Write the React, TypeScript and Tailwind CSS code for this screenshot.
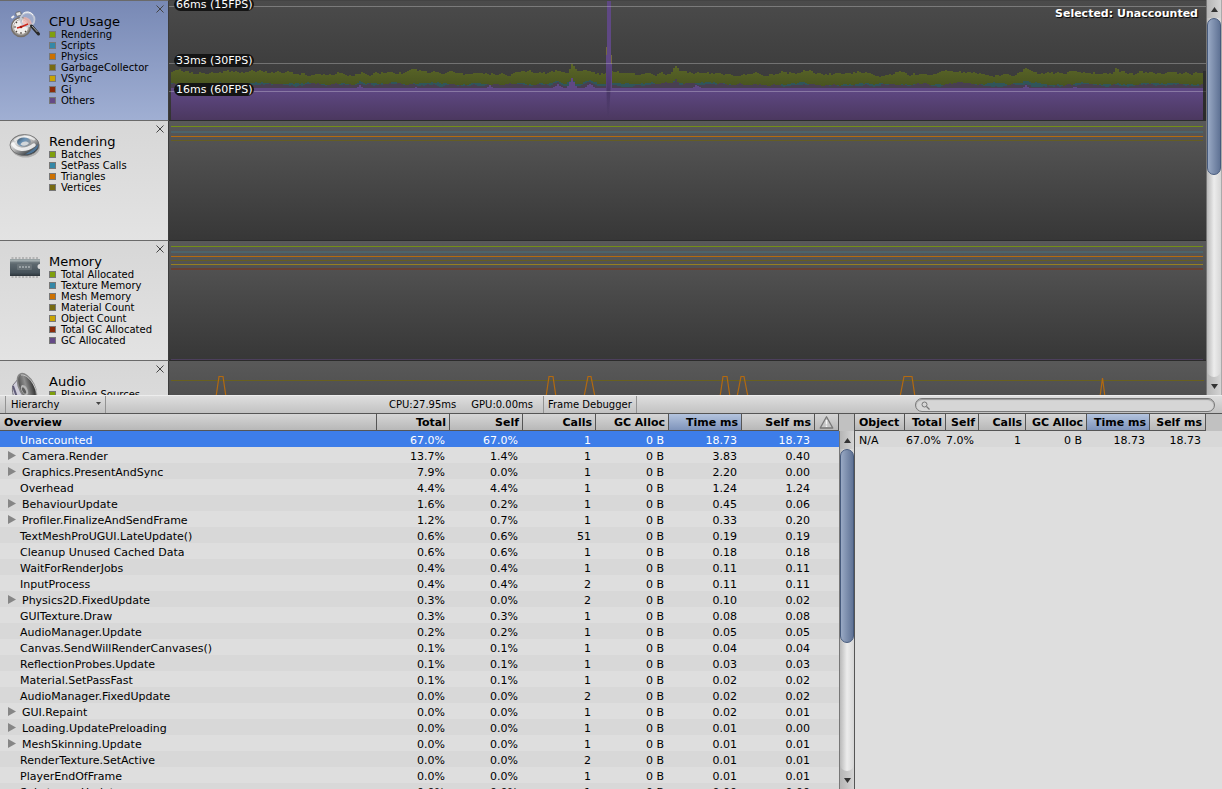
import { useState } from 'react';
import type { ReactNode } from 'react';

type Swatch = { label: string; color: string };

type ProfilerModule = {
  name: string;
  icon: ReactNode;
  chart: ReactNode;
  items: Swatch[];
  selected?: boolean;
};

type Sample = {
  name: string;
  parent?: boolean;
  total: string;
  self: string;
  calls: number;
  time: string;
  selfTime: string;
};

const GREEN = 'bg-[#7f9f0d]';
const BLUE = 'bg-[#3488a8]';
const ORANGE = 'bg-[#cc7000]';
const OLIVE = 'bg-[#776b13]';
const YELLOW = 'bg-[#c9a402]';
const RED = 'bg-[#8c2b0a]';
const PURPLE = 'bg-[#654a87]';

const CHART_WIDTH = 1037;
const CHART_HEIGHT = 119;

// Steps of two units, with a fixed pseudo random wobble
function wobble(seed: number, base: number, amount: number, peaks: number[][]) {
  let value = seed;
  let drift = 0;
  const points: number[][] = [];
  for (let x = 2; x <= 1033; x += 2) {
    value = (value * 16807) % 2147483647;
    drift = drift * 0.8 + (value / 2147483647 - 0.5) * amount;
    let y = base + drift;
    for (const [px, height, spread] of peaks) {
      const distance = Math.abs(x - px);
      if (distance < spread) y -= height * (1 - distance / spread);
    }
    points.push([x, Math.round(y)]);
  }
  return points;
}

function toArea(points: number[][]) {
  const steps = points.map(([x, y]) => `L${x} ${y}H${x + 2}`).join('');
  return `M2 119${steps}V119Z`;
}

const renderingArea = toArea(
  wobble(77, 72, 3, [[402, 8, 5], [506, 6, 4], [947, 6, 3], [388, 3, 8], [420, 3, 8], [856, 3, 7], [30, 2, 12], [610, 2, 12], [905, 3, 8]]),
);
const scriptsArea = toArea(
  wobble(4211, 83, 1.8, [[402, 5, 5], [506, 6, 5], [420, 3, 8], [388, 3, 6], [856, 3, 6], [190, 3, 5]]),
);
const physicsArea = toArea(
  wobble(951, 84, 2, [[402, 5, 4], [506, 5, 4], [420, 3, 6], [388, 3, 6], [856, 3, 6]]),
);
const othersArea = toArea(
  wobble(33, 87, 0.4, [[402, 10, 5], [388, 4, 6], [420, 4, 6], [527, 3, 5], [856, 3, 4], [190, 3, 4], [320, 3, 3]]),
);

function ChartFrame({ children }: { children: ReactNode }) {
  return (
    <svg
      className="block h-full w-full"
      viewBox={`0 0 ${CHART_WIDTH} ${CHART_HEIGHT}`}
      preserveAspectRatio="none"
      aria-hidden="true"
    >
      {children}
    </svg>
  );
}

function CpuChart() {
  return (
    <ChartFrame>
      <defs>
        <linearGradient id="othersFill" x1="0" y1="88" x2="0" y2="119" gradientUnits="userSpaceOnUse">
          <stop offset="0" stopColor="#5f4884" />
          <stop offset="1" stopColor="#4b385f" />
        </linearGradient>
        <linearGradient id="renderingFill" x1="0" y1="63" x2="0" y2="88" gradientUnits="userSpaceOnUse">
          <stop offset="0" stopColor="#5b6628" />
          <stop offset="1" stopColor="#46511f" />
        </linearGradient>
        <linearGradient id="spikeFade" x1="0" y1="0" x2="0" y2="1">
          <stop offset="0" stopColor="#33264c" stopOpacity="0.1" />
          <stop offset="0.5" stopColor="#33264c" stopOpacity="0.5" />
          <stop offset="1" stopColor="#33264c" stopOpacity="0" />
        </linearGradient>
      </defs>
      <g shapeRendering="crispEdges">
        <path d={renderingArea} fill="url(#renderingFill)" />
        <path d={scriptsArea} fill="#30555a" />
        <path d={physicsArea} fill="#483f50" />
        <path d={othersArea} fill="url(#othersFill)" />
        <path d="M437 88V54H438V0H442V63H443V88Z" fill="#5f4884" />
        <rect x="437" y="46" width="1" height="8" fill="#746a3f" />
        <rect x="442" y="54" width="1" height="9" fill="#746a3f" />
      </g>
      <path d="M437 62H443L440 116H438Z" fill="url(#spikeFade)" />
      <g shapeRendering="crispEdges" fill="#ffffff" fillOpacity="0.27">
        <rect x="0" y="5" width="1037" height="1" />
        <rect x="0" y="62" width="1037" height="1" />
        <rect x="0" y="90" width="1037" height="1" />
      </g>
      <rect x="1034" y="70" width="3" height="49" fill="#262626" fillOpacity="0.6" />
    </ChartFrame>
  );
}

function LinesChart({ lines }: { lines: [number, number, string][] }) {
  return (
    <ChartFrame>
      <g shapeRendering="crispEdges">
        {lines.map(([y, height, color]) => (
          <rect key={y} x="2" y={y} width="1032" height={height} fill={color} />
        ))}
      </g>
    </ChartFrame>
  );
}

function AudioChart() {
  return (
    <ChartFrame>
      <rect x="2" y="19" width="1033" height="1" fill="#69601e" />
      <path
        d="M47 36L50 15.500H54L57 36M377 36L380 15.500H384L387 36M415 36L419 15.500H422L426 36M551 36L554 15.500H558L561 36M568 36L572 15.500H575L579 36M731 36L735 15.500H743L746 36M931 36L933.500 17L936 36"
        fill="none"
        stroke="#b36a10"
        strokeWidth="1.200"
      />
    </ChartFrame>
  );
}

function StopwatchIcon() {
  return (
    <svg className="size-8" viewBox="0 0 32 32" aria-hidden="true">
      <defs>
        <radialGradient id="watchRim" cx="0.4" cy="0.35">
          <stop offset="0.6" stopColor="#ffffff" />
          <stop offset="1" stopColor="#8f8f8f" />
        </radialGradient>
      </defs>
      <rect x="7" y="3" width="5" height="4" rx="1" fill="#e4e4e4" stroke="#606060" strokeWidth="0.8" transform="rotate(-12 9 5)" />
      <path d="M2.500 9L5 7" stroke="#efefef" strokeWidth="2" />
      <circle cx="12" cy="18" r="9.500" fill="url(#watchRim)" stroke="#77706a" strokeWidth="1.500" />
      <circle cx="12" cy="18" r="7.500" fill="#f1eeec" stroke="#aaa39c" />
      <path d="M12 11V13M12 23V25M5 18H7M7 13L8 14M7 23L8 22M17 23L16 22" stroke="#4e4640" strokeWidth="1.200" />
      <path d="M15 8A8 8 0 0 1 23 15L12 18Z" fill="#ee9a92" fillOpacity="0.75" />
      <circle cx="18.500" cy="10.500" r="7" fill="#ffffff" fillOpacity="0.25" stroke="#c3c9d6" strokeWidth="1.800" />
      <path d="M14 4.500A7 7 0 0 1 24 6" fill="none" stroke="#f3f5f8" strokeWidth="1" />
      <path d="M12 18L19 15M8 19L12 18" stroke="#c9271d" strokeWidth="1.400" />
      <circle cx="12" cy="18" r="1.300" fill="#a51710" />
      <path d="M22.500 17L29.500 25" stroke="#282828" strokeWidth="3" strokeLinecap="round" />
      <path d="M23 17L28.500 23" stroke="#c8c8c8" strokeWidth="0.800" />
    </svg>
  );
}

function TorusIcon() {
  return (
    <svg className="size-8" viewBox="0 0 32 32" aria-hidden="true">
      <defs>
        <linearGradient id="torusBody" x1="0" y1="0.200" x2="0.600" y2="1">
          <stop offset="0" stopColor="#8a8a8a" />
          <stop offset="0.25" stopColor="#e2e2e2" />
          <stop offset="0.55" stopColor="#b0b0b0" />
          <stop offset="1" stopColor="#30363b" />
        </linearGradient>
        <linearGradient id="torusHole" x1="0" y1="0" x2="1" y2="0.600">
          <stop offset="0" stopColor="#3c5265" />
          <stop offset="0.5" stopColor="#6a92b5" />
          <stop offset="1" stopColor="#8f9499" />
        </linearGradient>
      </defs>
      <ellipse cx="16.500" cy="18" rx="14.500" ry="10.500" fill="#000000" fillOpacity="0.2" />
      <ellipse cx="15.500" cy="16" rx="14.500" ry="10.500" fill="url(#torusBody)" stroke="#6b6b6b" strokeWidth="0.800" />
      <path d="M16 25.500C23 25.500 29 21 29.500 15C25 20 21 22.500 16 25.500Z" fill="#4f7596" />
      <path d="M4 15C7 21 16 22.500 25 16" stroke="#fafafa" strokeOpacity="0.85" strokeWidth="3.500" fill="none" strokeLinecap="round" />
      <path d="M6 11C9 7.500 19 6 25 10.500" stroke="#ffffff" strokeOpacity="0.6" strokeWidth="2" fill="none" strokeLinecap="round" />
      <ellipse cx="15" cy="13" rx="7" ry="4.500" fill="url(#torusHole)" />
      <path d="M11.500 15.500C12.500 12 18 11.500 20 14C18 17 14 17.500 11.500 15.500Z" fill="#d3d7da" />
    </svg>
  );
}

function ChipIcon() {
  return (
    <svg className="size-8" viewBox="0 -2 32 32" aria-hidden="true">
      <defs>
        <linearGradient id="chipBody" x1="0" y1="0" x2="0" y2="1">
          <stop offset="0" stopColor="#929c9f" />
          <stop offset="0.3" stopColor="#5d686e" />
          <stop offset="0.8" stopColor="#46525a" />
          <stop offset="1" stopColor="#2c343a" />
        </linearGradient>
      </defs>
      <path d="M2.500 7.500H30M2.500 25.500H30" stroke="#b4b4b4" strokeWidth="3" strokeDasharray="2 1.500" />
      <path d="M1 8H31V13A2.500 2.500 0 0 0 31 18V25H1Z" fill="url(#chipBody)" />
      <path d="M1 9.500H31" stroke="#a3adaf" strokeWidth="2" />
      <rect x="8" y="13" width="15" height="6" rx="1" fill="#7b8488" fillOpacity="0.5" />
      <path d="M10 16H21" stroke="#a9b1b4" strokeWidth="1.500" strokeDasharray="2 1" />
    </svg>
  );
}

function SpeakerIcon() {
  return (
    <svg className="size-8" viewBox="0 -3 32 32" aria-hidden="true">
      <defs>
        <linearGradient id="coneFill" x1="0" y1="0" x2="1" y2="0.5">
          <stop offset="0" stopColor="#333333" />
          <stop offset="0.55" stopColor="#8e8e8e" />
          <stop offset="1" stopColor="#333333" />
        </linearGradient>
      </defs>
      <path d="M10 6L4 13C2 19 5 28 9 31L20 30Z" fill="#cfcdd9" stroke="#77757f" />
      <path d="M4 14L10 31" stroke="#605c78" strokeWidth="2" />
      <ellipse cx="18" cy="15.500" rx="7.500" ry="15" fill="url(#coneFill)" stroke="#858585" strokeWidth="1.600" transform="rotate(-27 18 15.500)" />
      <path d="M12 3C19 2 28 14 29 27" stroke="#d5d5d5" strokeWidth="0.800" fill="none" />
      <ellipse cx="15.500" cy="18" rx="3" ry="5.500" fill="#b5b5b5" transform="rotate(-27 15.500 18)" />
      <ellipse cx="15" cy="18.500" rx="1.500" ry="3.500" fill="#5c5c5c" transform="rotate(-27 15 18.500)" />
    </svg>
  );
}

const modules: ProfilerModule[] = [
  {
    name: 'CPU Usage',
    icon: <StopwatchIcon />,
    chart: <CpuChart />,
    selected: true,
    items: [
      { label: 'Rendering', color: GREEN },
      { label: 'Scripts', color: BLUE },
      { label: 'Physics', color: ORANGE },
      { label: 'GarbageCollector', color: OLIVE },
      { label: 'VSync', color: YELLOW },
      { label: 'Gi', color: RED },
      { label: 'Others', color: PURPLE },
    ],
  },
  {
    name: 'Rendering',
    icon: <TorusIcon />,
    chart: <LinesChart lines={[[5, 1, '#748d17'], [10, 2, '#4c636b'], [15, 1, '#b36a10'], [19, 1, '#655d22']]} />,
    items: [
      { label: 'Batches', color: GREEN },
      { label: 'SetPass Calls', color: BLUE },
      { label: 'Triangles', color: ORANGE },
      { label: 'Vertices', color: OLIVE },
    ],
  },
  {
    name: 'Memory',
    icon: <ChipIcon />,
    chart: (
      <LinesChart
        lines={[
          [5, 1, '#748d17'],
          [10, 2, '#4c636b'],
          [15, 1, '#b36a10'],
          [19, 1, '#655d22'],
          [23, 1, '#967f20'],
          [27, 2, '#683f32'],
          [118, 1, '#4c3f5c'],
        ]}
      />
    ),
    items: [
      { label: 'Total Allocated', color: GREEN },
      { label: 'Texture Memory', color: BLUE },
      { label: 'Mesh Memory', color: ORANGE },
      { label: 'Material Count', color: OLIVE },
      { label: 'Object Count', color: YELLOW },
      { label: 'Total GC Allocated', color: RED },
      { label: 'GC Allocated', color: PURPLE },
    ],
  },
  {
    name: 'Audio',
    icon: <SpeakerIcon />,
    chart: <AudioChart />,
    items: [{ label: 'Playing Sources', color: GREEN }],
  },
];

const samples: Sample[] = [
  { name: 'Unaccounted', total: '67.0%', self: '67.0%', calls: 1, time: '18.73', selfTime: '18.73' },
  { name: 'Camera.Render', parent: true, total: '13.7%', self: '1.4%', calls: 1, time: '3.83', selfTime: '0.40' },
  { name: 'Graphics.PresentAndSync', parent: true, total: '7.9%', self: '0.0%', calls: 1, time: '2.20', selfTime: '0.00' },
  { name: 'Overhead', total: '4.4%', self: '4.4%', calls: 1, time: '1.24', selfTime: '1.24' },
  { name: 'BehaviourUpdate', parent: true, total: '1.6%', self: '0.2%', calls: 1, time: '0.45', selfTime: '0.06' },
  { name: 'Profiler.FinalizeAndSendFrame', parent: true, total: '1.2%', self: '0.7%', calls: 1, time: '0.33', selfTime: '0.20' },
  { name: 'TextMeshProUGUI.LateUpdate()', total: '0.6%', self: '0.6%', calls: 51, time: '0.19', selfTime: '0.19' },
  { name: 'Cleanup Unused Cached Data', total: '0.6%', self: '0.6%', calls: 1, time: '0.18', selfTime: '0.18' },
  { name: 'WaitForRenderJobs', total: '0.4%', self: '0.4%', calls: 1, time: '0.11', selfTime: '0.11' },
  { name: 'InputProcess', total: '0.4%', self: '0.4%', calls: 2, time: '0.11', selfTime: '0.11' },
  { name: 'Physics2D.FixedUpdate', parent: true, total: '0.3%', self: '0.0%', calls: 2, time: '0.10', selfTime: '0.02' },
  { name: 'GUITexture.Draw', total: '0.3%', self: '0.3%', calls: 1, time: '0.08', selfTime: '0.08' },
  { name: 'AudioManager.Update', total: '0.2%', self: '0.2%', calls: 1, time: '0.05', selfTime: '0.05' },
  { name: 'Canvas.SendWillRenderCanvases()', total: '0.1%', self: '0.1%', calls: 1, time: '0.04', selfTime: '0.04' },
  { name: 'ReflectionProbes.Update', total: '0.1%', self: '0.1%', calls: 1, time: '0.03', selfTime: '0.03' },
  { name: 'Material.SetPassFast', total: '0.1%', self: '0.1%', calls: 1, time: '0.02', selfTime: '0.02' },
  { name: 'AudioManager.FixedUpdate', total: '0.0%', self: '0.0%', calls: 2, time: '0.02', selfTime: '0.02' },
  { name: 'GUI.Repaint', parent: true, total: '0.0%', self: '0.0%', calls: 1, time: '0.02', selfTime: '0.01' },
  { name: 'Loading.UpdatePreloading', parent: true, total: '0.0%', self: '0.0%', calls: 1, time: '0.01', selfTime: '0.00' },
  { name: 'MeshSkinning.Update', parent: true, total: '0.0%', self: '0.0%', calls: 1, time: '0.01', selfTime: '0.01' },
  { name: 'RenderTexture.SetActive', total: '0.0%', self: '0.0%', calls: 2, time: '0.01', selfTime: '0.01' },
  { name: 'PlayerEndOfFrame', total: '0.0%', self: '0.0%', calls: 1, time: '0.01', selfTime: '0.01' },
  { name: 'Substance.Update', total: '0.0%', self: '0.0%', calls: 1, time: '0.00', selfTime: '0.00' },
];

const HEAD = 'h-[17px] overflow-hidden border-r border-b border-[#555] bg-linear-to-b from-[#d6d6d6] to-[#b8b8b8] p-0 pt-[2px] pr-[3px] leading-[14px] font-bold whitespace-nowrap';
const HEAD_ACTIVE = 'h-[17px] overflow-hidden border-r border-b border-[#555] bg-linear-to-b from-[#b4c4de] to-[#7f94bb] p-0 pt-[2px] pr-[3px] leading-[14px] font-bold whitespace-nowrap';
const CELL = 'h-4 overflow-hidden p-0 pt-[3px] pr-[5px] text-right leading-[13px] whitespace-nowrap';

function ModulePanel({ module, onClose }: { module: ProfilerModule; onClose: () => void }) {
  return (
    <div className="flex h-[120px] shrink-0">
      <div
        className={`flex w-[169px] shrink-0 border-t border-r border-t-[#6a6a6a] border-r-[#3c3c3c] bg-linear-to-b pr-1 pl-[9px] ${
          module.selected ? 'from-[#7889b5] to-[#a0afd3]' : 'from-[#d7d7d7] to-[#e3e3e3]'
        }`}
      >
        <div className="w-10 shrink-0 pt-2">{module.icon}</div>
        <div className="min-w-0 flex-1 pt-3">
          <h2 className="h-4 text-[13px] leading-[18px] whitespace-nowrap">{module.name}</h2>
          <ul>
            {module.items.map((item) => (
              <li key={item.label} className="flex h-[11px] items-center gap-[5px] text-[10px] leading-[11px] whitespace-nowrap">
                <span className={`size-[7px] shrink-0 border border-[#777] ${item.color}`} />
                {item.label}
              </li>
            ))}
          </ul>
        </div>
        <div className="pt-1">
          <button type="button" aria-label={`Close ${module.name}`} onClick={onClose} className="block">
            <svg className="size-2" viewBox="0 0 8 8" aria-hidden="true">
              <path d="M0.500 0.500L7.500 7.500M7.500 0.500L0.500 7.500" stroke="#444" strokeWidth="1" />
            </svg>
          </button>
        </div>
      </div>
      <div
        className={`relative min-w-0 flex-1 border-t bg-linear-to-b ${
          module.selected ? 'border-[#444] from-[#4b4b4b] to-[#333]' : 'border-[#2b2b2b] from-[#595959] to-[#373737]'
        }`}
      >
        {module.chart}
        {module.selected && (
          <>
            <ChartLabel className="-top-[3px]">66ms (15FPS)</ChartLabel>
            <ChartLabel className="top-[53px]">33ms (30FPS)</ChartLabel>
            <ChartLabel className="top-[82px]">16ms (60FPS)</ChartLabel>
            <p className="absolute top-1 right-2 text-[11px] leading-[18px] font-bold text-white [text-shadow:1px_1px_1px_#000]">
              Selected: Unaccounted
            </p>
          </>
        )}
      </div>
    </div>
  );
}

function ChartLabel({ className, children }: { className: string; children: ReactNode }) {
  return (
    <span className={`absolute left-[5px] rounded-full bg-[#141414] px-[2px] text-[11px] leading-[13px] whitespace-nowrap text-white ${className}`}>
      {children}
    </span>
  );
}

// Share of the track that the thumb takes is given by the two flex weights
function ScrollBar({ thumb, rest }: { thumb: number; rest: number }) {
  return (
    <div className="flex min-w-0 flex-1 flex-col border-l border-[#777] bg-linear-to-r from-[#b5b5b5] to-[#d5d5d5]">
      <ArrowButton direction="up" />
      <div className="flex min-h-0 flex-1 flex-col rounded-b-full bg-linear-to-r from-[#b9b9b9] via-[#ececec] to-[#d6d6d6]">
        <div
          className="rounded-full border border-[#465a7c] bg-linear-to-r from-[#99a9c4] to-[#607395]"
          style={{ flexGrow: thumb, flexBasis: 0 }}
        />
        <div style={{ flexGrow: rest, flexBasis: 0 }} />
      </div>
      <ArrowButton direction="down" />
    </div>
  );
}

function ArrowButton({ direction }: { direction: 'up' | 'down' }) {
  return (
    <button type="button" aria-label={`Scroll ${direction}`} className="flex h-[18px] shrink-0 items-center justify-center">
      <svg className="h-[5px] w-[7px]" viewBox="0 0 7 5" aria-hidden="true">
        <path d={direction === 'up' ? 'M3.500 0L7 5H0Z' : 'M0 0H7L3.500 5Z'} fill="#333" />
      </svg>
    </button>
  );
}

function Toolbar({ query, onQuery }: { query: string; onQuery: (value: string) => void }) {
  return (
    <div className="flex h-[18px] shrink-0 items-stretch border-t border-[#ededed] bg-linear-to-b from-[#dedede] to-[#c2c2c2] pl-[5px] text-[10px] leading-4">
      <label className="relative flex border-x border-[#939393]">
        <span className="sr-only">View</span>
        <select className="w-[99px] appearance-none bg-transparent pl-[5px] outline-none">
          <option>Hierarchy</option>
          <option>Timeline</option>
        </select>
        <svg className="pointer-events-none absolute top-[6px] right-1 h-[3px] w-[5px]" viewBox="0 0 5 3" aria-hidden="true">
          <path d="M0 0H5L2.500 3Z" fill="#444" />
        </svg>
      </label>
      <p className="ml-[283px] flex gap-[15px] pt-px whitespace-nowrap">
        <span>CPU:27.95ms</span>
        <span>GPU:0.00ms</span>
      </p>
      <button type="button" className="ml-[10px] border-x border-[#939393] px-1 whitespace-nowrap">
        Frame Debugger
      </button>
      <div className="flex-1" />
      <label className="mt-[2px] mr-[7px] flex h-[14px] w-[300px] items-center rounded-full border border-[#777] bg-[#d6d6d6] pl-[5px] shadow-[inset_0_1px_1px_#999]">
        <span className="sr-only">Search samples</span>
        <svg className="size-[9px]" viewBox="0 0 9 9" fill="none" stroke="#777" aria-hidden="true">
          <circle cx="3.500" cy="3.500" r="2.500" />
          <path d="M5.500 5.500L8.500 8.500" strokeWidth="1.300" />
        </svg>
        <input
          type="text"
          value={query}
          onChange={(event) => onQuery(event.target.value)}
          className="min-w-0 flex-1 bg-transparent px-1 outline-none"
        />
      </label>
    </div>
  );
}

function SampleTable({ rows, current, onSelect }: { rows: Sample[]; current: string; onSelect: (name: string) => void }) {
  return (
    <table className="w-full table-fixed border-separate border-spacing-0">
      <colgroup>
        <col />
        <col className="w-[73px]" />
        <col className="w-[73px]" />
        <col className="w-[73px]" />
        <col className="w-[73px]" />
        <col className="w-[73px]" />
        <col className="w-[73px]" />
        <col className="w-6" />
      </colgroup>
      <thead>
        <tr>
          <th className={`${HEAD} pl-1 text-left`}>Overview</th>
          <th className={`${HEAD} text-right`}>Total</th>
          <th className={`${HEAD} text-right`}>Self</th>
          <th className={`${HEAD} text-right`}>Calls</th>
          <th className={`${HEAD} text-right`}>GC Alloc</th>
          <th className={`${HEAD_ACTIVE} text-right`}>Time ms</th>
          <th className={`${HEAD} text-right`}>Self ms</th>
          <th className={`${HEAD} pl-1`} aria-label="Warnings">
            <svg className="h-[14px] w-[15px]" viewBox="0 0 15 14" aria-hidden="true">
              <path d="M7.500 0.800L13.800 12H1.200Z" fill="#c6c6c6" stroke="#777" strokeWidth="1.300" strokeLinejoin="round" />
              <path d="M7.500 4V8.500M7.500 9.500V11" stroke="#f7f7f7" strokeWidth="1.500" />
            </svg>
          </th>
        </tr>
      </thead>
      <tbody>
        {rows.map((row) => (
          <tr
            key={row.name}
            onClick={() => onSelect(row.name)}
            className={row.name === current ? 'bg-[#3d7de9] text-white' : 'odd:bg-[#d8d8d8] even:bg-[#dedede]'}
          >
            <td className="h-4 overflow-hidden p-0 whitespace-nowrap">
              <div className="flex h-4 items-center">
                <span className={row.parent ? 'w-[22px] pl-2' : 'w-5 pl-2'}>
                  {row.parent && (
                    <svg className="block h-[9px] w-2" viewBox="0 0 8 9" aria-hidden="true">
                      <path d="M0 0L8 4.500L0 9Z" fill="#868686" />
                    </svg>
                  )}
                </span>
                <span className="pt-[3px] leading-[13px]">{row.name}</span>
              </div>
            </td>
            <td className={CELL}>{row.total}</td>
            <td className={CELL}>{row.self}</td>
            <td className={CELL}>{row.calls}</td>
            <td className={CELL}>0 B</td>
            <td className={CELL}>{row.time}</td>
            <td className={CELL}>{row.selfTime}</td>
            <td className={CELL} />
          </tr>
        ))}
      </tbody>
    </table>
  );
}

function ObjectTable() {
  return (
    <table className="w-full table-fixed border-separate border-spacing-0">
      <colgroup>
        <col className="w-[50px]" />
        <col className="w-[41px]" />
        <col className="w-[33px]" />
        <col className="w-[47px]" />
        <col className="w-[61px]" />
        <col className="w-[63px]" />
        <col className="w-[56px]" />
        <col />
      </colgroup>
      <thead>
        <tr>
          <th className={`${HEAD} pl-1 text-left`}>Object</th>
          <th className={`${HEAD} text-right`}>Total</th>
          <th className={`${HEAD} text-right`}>Self</th>
          <th className={`${HEAD} text-right`}>Calls</th>
          <th className={`${HEAD} text-right`}>GC Alloc</th>
          <th className={`${HEAD_ACTIVE} text-right`}>Time ms</th>
          <th className={`${HEAD} text-right`}>Self ms</th>
          <td className="bg-[#c1c1c1] p-0" />
        </tr>
      </thead>
      <tbody>
        <tr className="bg-[#d8d8d8]">
          <td className="h-4 p-0 pt-[3px] pl-1 leading-[13px]">N/A</td>
          <td className={CELL}>67.0%</td>
          <td className={CELL}>7.0%</td>
          <td className={CELL}>1</td>
          <td className={CELL}>0 B</td>
          <td className={CELL}>18.73</td>
          <td className={CELL}>18.73</td>
          <td className={CELL} />
        </tr>
      </tbody>
    </table>
  );
}

export default function App() {
  const [closed, setClosed] = useState<string[]>([]);
  const [current, setCurrent] = useState('Unaccounted');
  const [query, setQuery] = useState('');

  const visibleModules = modules.filter((m) => !closed.includes(m.name));
  const rows = samples.filter((s) => s.name.toLowerCase().includes(query.trim().toLowerCase()));

  return (
    <main className="flex h-screen flex-col overflow-hidden bg-[#dedede] font-['DejaVu_Sans',sans-serif] text-[11px] leading-4 text-black">
      <section className="flex min-h-0 flex-1 bg-[#3a3a3a]">
        <div className="flex min-w-0 flex-1 flex-col overflow-hidden">
          {visibleModules.map((m) => (
            <ModulePanel key={m.name} module={m} onClose={() => setClosed([...closed, m.name])} />
          ))}
        </div>
        <div className="flex w-4 shrink-0 border-r border-[#aaa]">
          <ScrollBar thumb={155} rest={202} />
        </div>
      </section>

      <section className="flex h-[394px] shrink-0 flex-col">
        <Toolbar query={query} onQuery={setQuery} />
        <div className="flex min-h-0 flex-1 border-t border-[#555]">
          <div className="min-w-0 flex-1 overflow-hidden">
            <SampleTable rows={rows} current={current} onSelect={setCurrent} />
          </div>
          <div className="flex w-4 shrink-0 border-r border-[#555] bg-[#c1c1c1] pt-[17px]">
            <ScrollBar thumb={193} rest={129} />
          </div>
          <div className="w-[367px] shrink-0 overflow-hidden">
            <ObjectTable />
          </div>
        </div>
      </section>
    </main>
  );
}
